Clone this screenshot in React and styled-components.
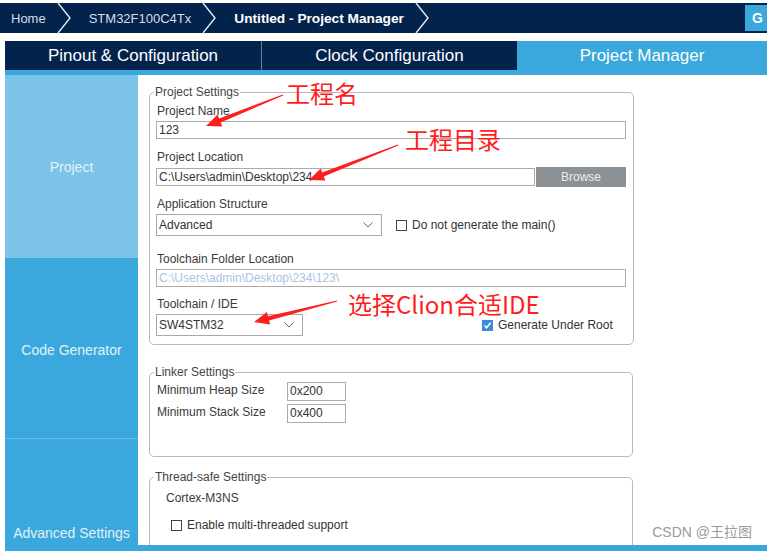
import React from "react";
import styled, { createGlobalStyle } from "styled-components";

const GlobalStyle = createGlobalStyle`
  body {
    margin: 0;
    background: #fff;
  }
`;

const NAVY = "#03234c";
const BLUE = "#3aa8dc";
const PALE = "#7cc4e7";

const Page = styled.div`
  position: relative;
  width: 767px;
  height: 551px;
  overflow: hidden;
  background: #fff;
  font-family: "Liberation Sans", Arial, sans-serif;
`;

const Breadcrumb = styled.div`
  margin-top: 3px;
  height: 30px;
  background: ${NAVY};
  display: flex;
  align-items: center;
`;

const Crumb = styled.div`
  display: flex;
  align-items: center;
  height: 100%;
  padding-left: ${(p) => (p.$first ? "11px" : "18px")};
  font-size: ${(p) => (p.$active ? "13.7px" : "13px")};
  font-weight: ${(p) => (p.$active ? "bold" : "normal")};
  color: ${(p) => (p.$active ? "#ffffff" : "#d6dee8")};
`;

const Chevron = styled.svg`
  margin-left: 11px;
  flex: none;
`;

const GoButton = styled.div`
  margin-left: auto;
  margin-right: -8px;
  width: 30px;
  height: 26px;
  background: ${BLUE};
  color: #fff;
  font-weight: bold;
  font-size: 14px;
  line-height: 26px;
  padding-left: 7px;
  box-sizing: border-box;
`;

const Tabs = styled.div`
  display: flex;
  height: 29px;
  margin: 8px 0 0 5px;
`;

const Tab = styled.div`
  flex: none;
  width: ${(p) => p.$w}px;
  box-sizing: border-box;
  background: ${(p) => (p.$active ? BLUE : NAVY)};
  border-right: ${(p) => (p.$divider ? "1px solid #6f7d90" : "none")};
  color: #ffffff;
  font-size: 17px;
  display: flex;
  align-items: center;
  justify-content: center;
`;

const Strip = styled.div`
  height: ${(p) => p.$h}px;
  margin-left: 5px;
  background: ${BLUE};
`;

const Main = styled.div`
  display: flex;
  height: 470px;
  margin-left: 5px;
  overflow: hidden;
`;

const Sidebar = styled.div`
  width: 133px;
  flex: none;
  display: flex;
  flex-direction: column;
`;

const SideItem = styled.div`
  flex: none;
  height: ${(p) => p.$h}px;
  box-sizing: border-box;
  padding-top: ${(p) => p.$pt || 0}px;
  background: ${(p) => (p.$selected ? PALE : BLUE)};
  border-top: ${(p) => (p.$line ? "1px solid #6cbde6" : "none")};
  display: flex;
  align-items: center;
  justify-content: center;
  color: #e2f1fa;
  font-size: 14px;
`;

const Content = styled.div`
  flex: 1;
  padding: 10px 0 0 11px;
  overflow: hidden;
`;

const Group = styled.fieldset`
  width: 484px;
  box-sizing: border-box;
  margin: ${(p) => p.$mt || 0}px 0 0 0;
  padding: ${(p) => p.$pt}px 7px ${(p) => p.$pb}px 6px;
  border: 1px solid #b9b9b9;
  border-radius: 5px;
  font-size: 12px;
  color: #333;
`;

const Legend = styled.legend`
  font-size: 12px;
  line-height: 14px;
  color: #444;
  padding: 0 1px;
  margin-left: -2px;
`;

const Label = styled.div`
  font-size: 12px;
  line-height: 14px;
  color: #3a3a3a;
  padding-left: 1px;
  margin-top: ${(p) => p.$mt || 0}px;
  margin-bottom: 3px;
`;

const TextBox = styled.div`
  height: 18px;
  box-sizing: border-box;
  width: ${(p) => (p.$w ? `${p.$w}px` : "100%")};
  border: 1px solid #ababab;
  padding: 0 2px;
  font-size: 12px;
  line-height: 16px;
  color: ${(p) => p.$color || "#333"};
  white-space: nowrap;
  overflow: hidden;
`;

const Row = styled.div`
  display: flex;
  align-items: center;
`;

const BrowseButton = styled.div`
  width: 90px;
  height: 20px;
  background: #8c9196;
  color: #ececec;
  font-size: 12px;
  display: flex;
  align-items: center;
  justify-content: center;
  margin-left: 1px;
`;

const SelectBox = styled.div`
  width: ${(p) => p.$w}px;
  height: 22px;
  box-sizing: border-box;
  border: 1px solid #a9a9a9;
  display: flex;
  align-items: center;
  justify-content: space-between;
  padding: 0 8px 0 2px;
  font-size: 12px;
  color: #333;
`;

const CheckLine = styled.div`
  display: flex;
  align-items: center;
  margin-left: ${(p) => p.$ml || 0}px;
  margin-top: ${(p) => p.$mt || 0}px;
  font-size: 12px;
  color: #333;
`;

const Box = styled.div`
  width: 11px;
  height: 11px;
  box-sizing: border-box;
  border: 1px solid ${(p) => (p.$checked ? "#3b8bd8" : "#444")};
  background: ${(p) => (p.$checked ? "#3b8bd8" : "#fff")};
  margin-right: 5px;
  display: flex;
  align-items: center;
  justify-content: center;
`;

const SizeGrid = styled.div`
  display: grid;
  grid-template-columns: 131px 59px;
  grid-auto-rows: 19px;
  row-gap: 3px;
  align-items: center;
`;

const SmallInput = styled.div`
  height: 19px;
  box-sizing: border-box;
  border: 1px solid #ababab;
  padding: 0 2px;
  font-size: 12px;
  line-height: 17px;
  color: #333;
`;

const Plain = styled.div`
  margin-left: 10px;
  font-size: 12px;
  line-height: 14px;
  color: #3a3a3a;
`;

const Overlay = styled.svg`
  position: absolute;
  left: 0;
  top: 0;
  pointer-events: none;
`;

const Note = styled.div`
  position: absolute;
  left: ${(p) => p.$x}px;
  top: ${(p) => p.$y}px;
  font-family: "Noto Sans CJK SC", sans-serif;
  font-size: 24px;
  line-height: 1;
  color: #ff1d1d;
  white-space: nowrap;
`;

const Watermark = styled.div`
  position: absolute;
  right: 15px;
  bottom: 10px;
  font-family: "Liberation Sans", "Noto Sans CJK SC", sans-serif;
  font-size: 14px;
  color: #9a9a9a;
`;

const DownArrow = () => (
  <svg width="10" height="6" viewBox="0 0 10 6">
    <polyline points="0.5,0.5 5,5 9.5,0.5" fill="none" stroke="#666" strokeWidth="1" />
  </svg>
);

const Check = ({ checked, children, ml, mt }) => (
  <CheckLine $ml={ml} $mt={mt}>
    <Box $checked={checked}>
      {checked && (
        <svg width="9" height="9" viewBox="0 0 9 9">
          <polyline points="1.5,4.5 3.6,6.8 7.6,1.8" fill="none" stroke="#fff" strokeWidth="1.6" />
        </svg>
      )}
    </Box>
    {children}
  </CheckLine>
);

const arrowPoints = ([tx, ty], [px, py]) => {
  const dx = px - tx;
  const dy = py - ty;
  const len = Math.hypot(dx, dy);
  const ux = dx / len;
  const uy = dy / len;
  const nx = -uy;
  const ny = ux;
  const bx = px - ux * 15;
  const by = py - uy * 15;
  const pts = [
    [tx + nx * 0.6, ty + ny * 0.6],
    [bx + nx * 2.2, by + ny * 2.2],
    [bx + nx * 6.5, by + ny * 6.5],
    [px, py],
    [bx - nx * 6.5, by - ny * 6.5],
    [bx - nx * 2.2, by - ny * 2.2],
    [tx - nx * 0.6, ty - ny * 0.6],
  ];
  return pts.map((p) => p.map((v) => v.toFixed(1)).join(",")).join(" ");
};

const arrows = [
  [[283, 95], [206, 126]],
  [[398, 145], [309, 180]],
  [[337, 301], [254, 322]],
];

const CrumbChevron = () => (
  <Chevron width="14" height="30" viewBox="0 0 14 30">
    <polyline points="1,0 13,15 1,30" fill="none" stroke="#e6ecf3" strokeWidth="1.4" />
  </Chevron>
);

export default function App() {
  return (
    <Page>
      <GlobalStyle />
      <Breadcrumb>
        <Crumb $first>
          Home
          <CrumbChevron />
        </Crumb>
        <Crumb>
          STM32F100C4Tx
          <CrumbChevron />
        </Crumb>
        <Crumb $active>
          Untitled - Project Manager
          <CrumbChevron />
        </Crumb>
        <GoButton>G</GoButton>
      </Breadcrumb>

      <Tabs>
        <Tab $w={257} $divider>Pinout &amp; Configuration</Tab>
        <Tab $w={255}>Clock Configuration</Tab>
        <Tab $w={250} $active>Project Manager</Tab>
      </Tabs>
      <Strip $h={5} />

      <Main>
        <Sidebar>
          <SideItem $h={183} $selected>Project</SideItem>
          <SideItem $h={180} $pt={4}>Code Generator</SideItem>
          <SideItem $h={188} $line>Advanced Settings</SideItem>
        </Sidebar>

        <Content>
          <Group $pt={5} $pb={8}>
            <Legend>Project Settings</Legend>
            <Label>Project Name</Label>
            <TextBox>123</TextBox>

            <Label $mt={11}>Project Location</Label>
            <Row>
              <TextBox $w={379}>C:\Users\admin\Desktop\234</TextBox>
              <BrowseButton>Browse</BrowseButton>
            </Row>

            <Label $mt={10}>Application Structure</Label>
            <Row>
              <SelectBox $w={226}>
                Advanced
                <DownArrow />
              </SelectBox>
              <Check ml={14}>Do not generate the main()</Check>
            </Row>

            <Label $mt={16}>Toolchain Folder Location</Label>
            <TextBox $color="#a8c5df">C:\Users\admin\Desktop\234\123\</TextBox>

            <Label $mt={10}>Toolchain / IDE</Label>
            <Row>
              <SelectBox $w={147}>
                SW4STM32
                <DownArrow />
              </SelectBox>
              <Check checked ml={179}>Generate Under Root</Check>
            </Row>
          </Group>

          <Group $mt={20} $pt={3} $pb={33}>
            <Legend>Linker Settings</Legend>
            <SizeGrid>
              <Label as="span">Minimum Heap Size</Label>
              <SmallInput>0x200</SmallInput>
              <Label as="span">Minimum Stack Size</Label>
              <SmallInput>0x400</SmallInput>
            </SizeGrid>
          </Group>

          <Group $mt={13} $pt={7} $pb={40}>
            <Legend>Thread-safe Settings</Legend>
            <Plain>Cortex-M3NS</Plain>
            <Check ml={15} mt={13}>Enable multi-threaded support</Check>
          </Group>
        </Content>
      </Main>
      <Strip $h={6} />

      <Overlay width="767" height="551" viewBox="0 0 767 551">
        {arrows.map(([tail, tip], i) => (
          <polygon key={i} points={arrowPoints(tail, tip)} fill="#ff1d1d" />
        ))}
      </Overlay>
      <Note $x={286} $y={81}>工程名</Note>
      <Note $x={405} $y={127}>工程目录</Note>
      <Note $x={348} $y={292}>选择Clion合适IDE</Note>
      <Watermark>CSDN @王拉图</Watermark>
    </Page>
  );
}
